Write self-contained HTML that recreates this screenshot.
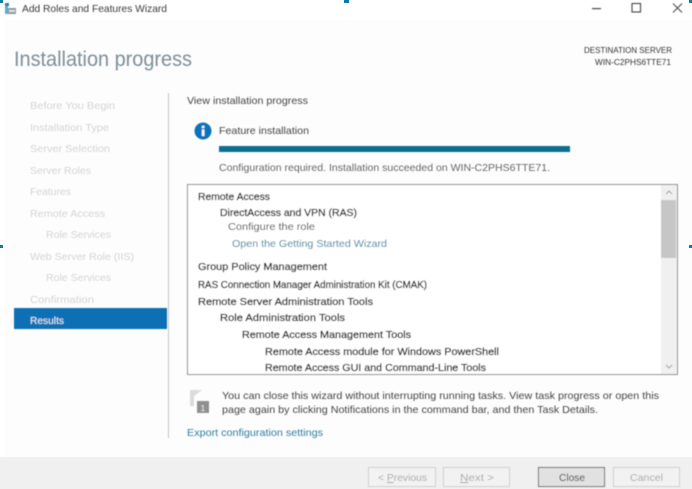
<!DOCTYPE html>
<html><head><meta charset="utf-8"><style>
html,body{margin:0;padding:0;background:#fff;width:692px;height:489px;overflow:hidden}
svg{display:block}
text{font-family:"Liberation Sans",sans-serif;font-size:10.5px;fill:#3a3a3a;dominant-baseline:alphabetic}
.n{fill:#d4d4d4}.b{fill:#222;font-weight:normal;stroke:#222;stroke-width:.3}.l{fill:#2f7f9f}.g{fill:#444}.d{fill:#a8a8a8}
</style></head><body>
<svg width="692" height="489" viewBox="0 0 692 489" xmlns="http://www.w3.org/2000/svg">
<rect width="692" height="489" fill="#fff"/>
<rect x="5" y="20" width="687" height="437" fill="#fdfdfd"/>
<rect x="0" y="457" width="692" height="32" fill="#f0f0f0"/>
<g fill="#127a9e"><rect x="0" y="0" width="3" height="3"/><rect x="344" y="0" width="5" height="3"/><rect x="689" y="0" width="3" height="3"/><rect x="0" y="245" width="3" height="3"/><rect x="689" y="245" width="3" height="3"/></g>
<g filter="url(#bl)">
<filter id="bl"><feGaussianBlur stdDeviation="0.45"/></filter>
<rect x="5" y="3" width="4" height="3" fill="#2b7fb0"/><rect x="5" y="6" width="3" height="8" fill="#5fa8d0"/><rect x="8" y="8" width="8" height="6" fill="#8a98a0"/><rect x="9" y="10" width="6" height="2" fill="#dfe5e8"/>
<text x="22" y="12" textLength="145" lengthAdjust="spacingAndGlyphs" fill="#333">Add Roles and Features Wizard</text>
<rect x="592" y="8" width="9" height="1.2" fill="#444"/>
<rect x="632" y="3.5" width="8.5" height="8.5" fill="none" stroke="#444" stroke-width="1.1"/>
<path d="M673 3.5L682 12.5M682 3.5L673 12.5" stroke="#444" stroke-width="1" fill="none"/>
<text x="14" y="66" textLength="178" lengthAdjust="spacingAndGlyphs" style="font-size:21px;fill:#7b8f99">Installation progress</text>
<text x="584" y="53" textLength="88" lengthAdjust="spacingAndGlyphs" style="font-size:7.8px;fill:#333">DESTINATION SERVER</text>
<text x="595" y="65" textLength="76" lengthAdjust="spacingAndGlyphs" style="font-size:7.8px;fill:#333">WIN-C2PHS6TTE71</text>

<text class="n" x="30" y="109" textLength="85" lengthAdjust="spacingAndGlyphs">Before You Begin</text>
<text class="n" x="30" y="131" textLength="79" lengthAdjust="spacingAndGlyphs">Installation Type</text>
<text class="n" x="30" y="152" textLength="80" lengthAdjust="spacingAndGlyphs">Server Selection</text>
<text class="n" x="30" y="174" textLength="61" lengthAdjust="spacingAndGlyphs">Server Roles</text>
<text class="n" x="30" y="195" textLength="41" lengthAdjust="spacingAndGlyphs">Features</text>
<text class="n" x="30" y="217" textLength="75" lengthAdjust="spacingAndGlyphs">Remote Access</text>
<text class="n" x="46" y="238" textLength="65" lengthAdjust="spacingAndGlyphs">Role Services</text>
<text class="n" x="30" y="260" textLength="104" lengthAdjust="spacingAndGlyphs">Web Server Role (IIS)</text>
<text class="n" x="46" y="281" textLength="65" lengthAdjust="spacingAndGlyphs">Role Services</text>
<text class="n" x="30" y="303" textLength="64" lengthAdjust="spacingAndGlyphs">Confirmation</text>
<rect x="14" y="308" width="153" height="21" fill="#0a6fb5"/>
<text x="30" y="324" textLength="34" lengthAdjust="spacingAndGlyphs" style="fill:#e8f2f8">Results</text>
<rect x="168" y="93" width="1" height="345" fill="#c4c4c4"/>

<text class="g" x="187" y="104" textLength="121" lengthAdjust="spacingAndGlyphs">View installation progress</text>
<circle cx="203" cy="131" r="8.5" fill="#0a72bc"/>
<rect x="201.8" y="129.5" width="2.6" height="6.5" fill="#fff"/><rect x="201.8" y="125.8" width="2.6" height="2.4" fill="#fff"/>
<text class="g" x="219" y="134" textLength="90" lengthAdjust="spacingAndGlyphs">Feature installation</text>
<rect x="219" y="146" width="351" height="6" fill="#0d6d8e"/>
<text x="219" y="171" textLength="331" lengthAdjust="spacingAndGlyphs" style="fill:#666">Configuration required. Installation succeeded on WIN-C2PHS6TTE71.</text>

<rect x="187.5" y="184.5" width="490" height="190" fill="#fff" stroke="#8c8c8c"/>
<rect x="661" y="185" width="16" height="189" fill="#f0f0f0"/>
<rect x="661" y="200" width="15" height="58" fill="#c6c6c6"/>
<path d="M666 194L669 191L672 194M666 365L669 368L672 365" stroke="#a0a0a0" fill="none"/>
<text class="b" x="198" y="200" textLength="72" lengthAdjust="spacingAndGlyphs">Remote Access</text>
<text class="b" x="220" y="216" textLength="137" lengthAdjust="spacingAndGlyphs">DirectAccess and VPN (RAS)</text>
<text class="g" x="228" y="230" textLength="87" lengthAdjust="spacingAndGlyphs">Configure the role</text>
<text class="l" x="232" y="247" textLength="155" lengthAdjust="spacingAndGlyphs">Open the Getting Started Wizard</text>
<text class="b" x="198" y="270" textLength="129" lengthAdjust="spacingAndGlyphs">Group Policy Management</text>
<text class="b" x="198" y="288" textLength="229" lengthAdjust="spacingAndGlyphs">RAS Connection Manager Administration Kit (CMAK)</text>
<text class="b" x="198" y="305" textLength="175" lengthAdjust="spacingAndGlyphs">Remote Server Administration Tools</text>
<text class="b" x="220" y="321" textLength="125" lengthAdjust="spacingAndGlyphs">Role Administration Tools</text>
<text class="b" x="242" y="338" textLength="169" lengthAdjust="spacingAndGlyphs">Remote Access Management Tools</text>
<text class="b" x="265" y="355" textLength="234" lengthAdjust="spacingAndGlyphs">Remote Access module for Windows PowerShell</text>
<text class="b" x="265" y="371" textLength="221" lengthAdjust="spacingAndGlyphs">Remote Access GUI and Command-Line Tools</text>

<path d="M190 390H202L194 396V406H190Z" fill="#dcdcdc"/>
<rect x="197" y="401" width="12" height="12" fill="#8f8f8f"/>
<text x="200.5" y="411" style="font-size:8.5px;fill:#eee">1</text>
<text class="g" x="222" y="399" textLength="437" lengthAdjust="spacingAndGlyphs">You can close this wizard without interrupting running tasks. View task progress or open this</text>
<text class="g" x="222" y="413" textLength="376" lengthAdjust="spacingAndGlyphs">page again by clicking Notifications in the command bar, and then Task Details.</text>
<text class="l" x="187" y="436" textLength="136" lengthAdjust="spacingAndGlyphs">Export configuration settings</text>

<rect x="368.5" y="467.5" width="67" height="19" fill="#f2f2f2" stroke="#cfcfcf"/>
<text class="d" x="378" y="481" textLength="49" lengthAdjust="spacingAndGlyphs">&lt; <tspan text-decoration="underline">P</tspan>revious</text>
<rect x="443.5" y="467.5" width="66" height="19" fill="#f2f2f2" stroke="#cfcfcf"/>
<text class="d" x="460" y="481" textLength="34" lengthAdjust="spacingAndGlyphs"><tspan text-decoration="underline">N</tspan>ext &gt;</text>
<rect x="538.5" y="467.5" width="66" height="19" fill="#e1e1e1" stroke="#6f6f6f"/>
<text x="559" y="481" textLength="26" lengthAdjust="spacingAndGlyphs" style="fill:#333">Close</text>
<rect x="613.5" y="467.5" width="66" height="19" fill="#f2f2f2" stroke="#cfcfcf"/>
<text class="d" x="630" y="481" textLength="33" lengthAdjust="spacingAndGlyphs">Cancel</text>
</g>
</svg>
</body></html>
